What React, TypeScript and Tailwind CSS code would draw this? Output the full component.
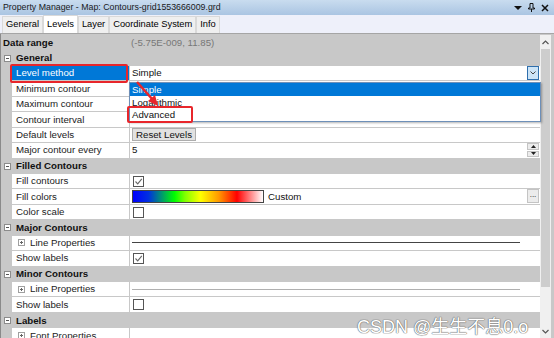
import { ReactNode } from "react";

const ROW = "h-[15.45px] shrink-0";

function Header({ title }: { title: string }) {
  return (
    <div className={`${ROW} flex items-center bg-[#c8c8c8]`}>
      <span className="ml-[3px] mr-[5px] flex h-[7px] w-[7px] items-center justify-center border border-[#8c8c8c] bg-white">
        <span className="h-px w-[3px] bg-[#555]" />
      </span>
      <span className="font-bold text-[#111]">{title}</span>
    </div>
  );
}

function Prop({
  label,
  children,
  selected,
  sub,
}: {
  label: string;
  children?: ReactNode;
  selected?: boolean;
  sub?: boolean;
}) {
  return (
    <div className={`${ROW} flex bg-[#c8c8c8] pb-px`}>
      <div
        className={`ml-[11px] mr-px flex w-[117px] items-center pl-[4px] ${
          selected ? "bg-[#0078d7] text-white" : "bg-white text-[#222]"
        }`}
      >
        {sub && (
          <span className="ml-[2px] mr-[5px] flex h-[7px] w-[7px] items-center justify-center border border-[#a0a0a0] bg-white">
            <span className="relative h-px w-[3px] bg-[#666]">
              <span className="absolute left-[1px] top-[-1px] h-[3px] w-px bg-[#666]" />
            </span>
          </span>
        )}
        {label}
      </div>
      <div className="relative flex flex-1 items-center bg-white pl-[2px] text-[#111]">
        {children}
      </div>
    </div>
  );
}

function Check({ on }: { on?: boolean }) {
  return (
    <span className="ml-[1px] flex h-[11px] w-[11px] items-center justify-center border border-[#555] bg-white">
      {on && (
        <svg width="9" height="9" viewBox="0 0 9 9">
          <path d="M1.5 4.5 L3.7 6.8 L7.8 1.8" fill="none" stroke="#666" strokeWidth="1.1" />
        </svg>
      )}
    </span>
  );
}

export default function App() {
  const tabs = ["General", "Levels", "Layer", "Coordinate System", "Info"];
  return (
    <div
      className="relative flex h-[338px] w-[554px] flex-col overflow-hidden bg-[#c8c8c8] text-[9.7px] leading-none"
      style={{ fontFamily: '"Liberation Sans", Arial, sans-serif' }}
    >
      {/* title bar */}
      <div className="flex h-[15px] shrink-0 items-center justify-between bg-gradient-to-b from-[#c9dcef] to-[#aac5e2] px-[3px] text-[8.8px] text-[#1a1a1a]">
        <span>Property Manager - Map: Contours-grid1553666009.grd</span>
        <div className="flex items-center gap-[6px] pr-[2px] text-[#111]">
          <svg width="8" height="6" viewBox="0 0 8 6">
            <path d="M0 1 H8 L4 5 Z" fill="#111" />
          </svg>
          <svg width="7" height="9" viewBox="0 0 7 9">
            <path d="M2 0.5 H5 V5 H6.5 V6 H0.5 V5 H2 Z M3.5 6 V9" fill="none" stroke="#111" strokeWidth="1" />
          </svg>
          <svg width="8" height="8" viewBox="0 0 8 8">
            <path d="M1 1 L7 7 M7 1 L1 7" stroke="#111" strokeWidth="1.5" />
          </svg>
        </div>
      </div>

      {/* tabs */}
      <div className="flex h-[19px] shrink-0 items-end border-b border-[#a5a5a5] bg-[#eef0fa] pl-[2px]">
        {tabs.map((t) => (
          <div
            key={t}
            className={`flex items-center border border-b-0 border-[#d9d9d9] px-[3px] text-[9.3px] ${
              t === "Levels" ? "h-[18px] bg-white" : "h-[17px] bg-[#efefef]"
            }`}
          >
            {t}
          </div>
        ))}
      </div>

      {/* grid */}
      <div className="flex min-h-0 flex-1 border-l border-[#8a8a8a] pt-px">
        <div className="flex flex-1 flex-col overflow-hidden">
          <div className={`${ROW} flex items-center bg-[#c8c8c8]`}>
            <span className="w-[128px] pl-[2px] font-bold text-[#111]">Data range</span>
            <span className="pl-[2px] text-[#777]">(-5.75E-009, 11.85)</span>
          </div>
          <Header title="General" />
          <Prop label="Level method" selected>
            Simple
            <span className="absolute right-[1px] top-0 flex h-[14px] w-[12px] items-center justify-center border border-[#2f6fad] bg-[#cce4f7]">
              <svg width="6" height="4" viewBox="0 0 6 4">
                <path d="M0.5 0.5 L3 3 L5.5 0.5" fill="none" stroke="#444" strokeWidth="1" />
              </svg>
            </span>
          </Prop>
          <Prop label="Minimum contour" />
          <Prop label="Maximum contour" />
          <Prop label="Contour interval" />
          <Prop label="Default levels">
            <span className="flex h-[13px] items-center border border-[#adadad] bg-[#e1e1e1] px-[3px]">
              Reset Levels
            </span>
          </Prop>
          <Prop label="Major contour every">
            5
            <span className="absolute right-[1px] top-0 flex h-[14px] w-[12px] flex-col gap-px">
              <span className="flex flex-1 items-center justify-center border border-[#c4c4c4] bg-[#ececec]">
                <svg width="5" height="3" viewBox="0 0 5 3">
                  <path d="M0 3 L2.5 0 L5 3 Z" fill="#222" />
                </svg>
              </span>
              <span className="flex flex-1 items-center justify-center border border-[#c4c4c4] bg-[#ececec]">
                <svg width="5" height="3" viewBox="0 0 5 3">
                  <path d="M0 0 L2.5 3 L5 0 Z" fill="#222" />
                </svg>
              </span>
            </span>
          </Prop>
          <Header title="Filled Contours" />
          <Prop label="Fill contours">
            <Check on />
          </Prop>
          <Prop label="Fill colors">
            <span className="h-[13px] w-[132px] border border-[#444] bg-[linear-gradient(to_right,#0000ff_0%,#0030e0_12%,#00ff00_32%,#80ff00_40%,#ffff00_52%,#ff9900_66%,#ff0000_80%,#ffffff_100%)]" />
            <span className="ml-[4px]">Custom</span>
            <span className="absolute right-[1px] top-0 flex h-[14px] w-[12px] items-end justify-center border border-[#c4c4c4] bg-[#ececec] pb-[3px] text-[8px] leading-none">
              ...
            </span>
          </Prop>
          <Prop label="Color scale">
            <Check />
          </Prop>
          <Header title="Major Contours" />
          <Prop label="Line Properties" sub>
            <span className="mr-[20px] h-px flex-1 bg-[#444]" />
          </Prop>
          <Prop label="Show labels">
            <Check on />
          </Prop>
          <Header title="Minor Contours" />
          <Prop label="Line Properties" sub>
            <span className="mr-[20px] h-px flex-1 bg-[#b0b0b0]" />
          </Prop>
          <Prop label="Show labels">
            <Check />
          </Prop>
          <Header title="Labels" />
          <Prop label="Font Properties" sub />
        </div>

        {/* scrollbar */}
        <div className="flex w-[11px] flex-col bg-[#f0f0f0]">
          <div className="flex h-[14px] items-center justify-center">
            <svg width="7" height="5" viewBox="0 0 7 5">
              <path d="M0.5 4 L3.5 1 L6.5 4" fill="none" stroke="#555" strokeWidth="1.2" />
            </svg>
          </div>
          <div className="mx-px h-[238px] bg-[#cdcdcd]" />
          <div className="flex-1" />
          <div className="flex h-[14px] items-center justify-center">
            <svg width="7" height="5" viewBox="0 0 7 5">
              <path d="M0.5 1 L3.5 4 L6.5 1" fill="none" stroke="#555" strokeWidth="1.2" />
            </svg>
          </div>
        </div>
        <div className="w-[3px] bg-[#c8c8c8]" />
      </div>

      {/* dropdown list */}
      <div className="absolute left-[129px] top-[82px] flex h-[40px] w-[412px] flex-col border border-[#6d8fb8] bg-white text-[#111] shadow-[1px_1px_2px_rgba(0,0,0,0.3)]">
        <div className="flex h-[13px] items-center bg-[#0078d7] pl-[2px] text-white">Simple</div>
        <div className="flex h-[13px] items-center pl-[2px]">Logarithmic</div>
        <div className="flex h-[12px] items-center pl-[2px]">Advanced</div>
      </div>

      {/* annotations */}
      <div className="absolute left-[10px] top-[64px] h-[19px] w-[118px] rounded-[2px] border-2 border-[#e8262b]" />
      <div className="absolute left-[127px] top-[106px] h-[17px] w-[66px] rounded-[2px] border-2 border-[#e8262b]" />
      <svg className="absolute left-0 top-0" width="554" height="338">
        <line x1="137" y1="82" x2="153" y2="100" stroke="#e8262b" strokeWidth="2.5" />
        <path d="M158 106 L148 101 L155 95 Z" fill="#e8262b" />
      </svg>

      {/* watermark */}
      <div
        className="absolute left-[357px] top-[318px] text-[18px] leading-none text-white"
        style={{
          fontFamily: '"Liberation Sans", "Noto Sans CJK SC", sans-serif',
          textShadow: "0 0 1px #666, 0 0 1px #666, 0 0 1px #888",
        }}
      >
        CSDN @生生不息0.o
      </div>
    </div>
  );
}
